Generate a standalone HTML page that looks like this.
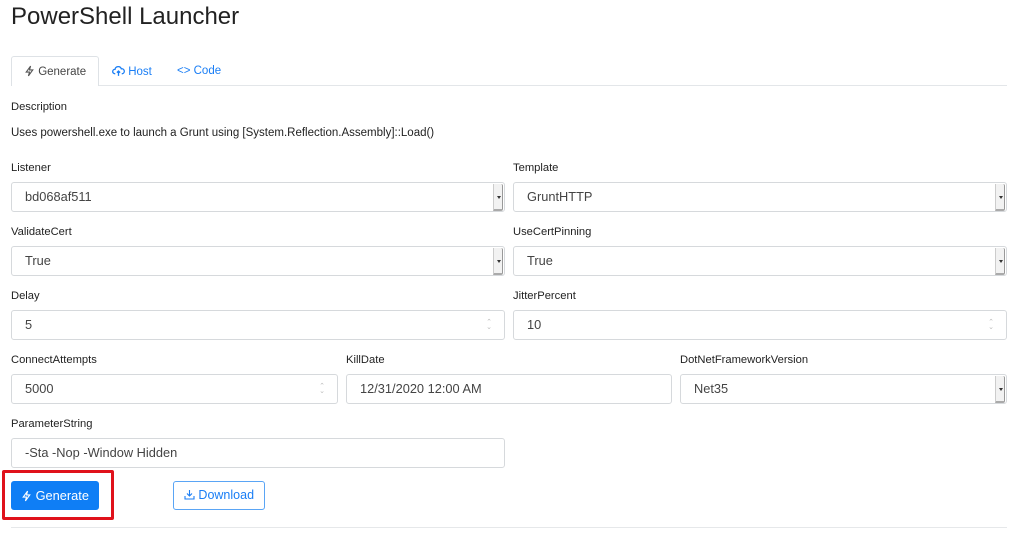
<!DOCTYPE html>
<html><head><meta charset="utf-8"><style>
*{box-sizing:border-box;margin:0;padding:0}
body{width:1024px;height:542px;background:#fff;font-family:"Liberation Sans",sans-serif;color:#212529;position:relative;overflow:hidden}
.a{position:absolute}
h1{position:absolute;left:11px;top:3px;font-size:24px;font-weight:400;color:#222}
.lbl{position:absolute;font-size:11.2px;color:#222}
.inp{position:absolute;height:30px;border:1px solid #d6d9dc;border-radius:3px;font-size:12.8px;color:#444;padding-left:13px;line-height:28px;background:#fff}
.sel .btn{position:absolute;right:1px;top:1px;width:10px;height:27px;border-left:1px solid #ccc;border-right:1px solid #999;border-bottom:2px solid #aaa;background:#f2f2f2;border-radius:0 2px 2px 0}
.sel .btn:after{content:"";position:absolute;left:3px;top:12px;border-left:2px solid transparent;border-right:2px solid transparent;border-top:3px solid #333}
.spin{position:absolute;right:12px;top:9px;font-size:7px;color:#bbb;line-height:5px}
</style></head><body>
<h1>PowerShell Launcher</h1>
<div class="a" style="left:11px;top:56px;width:88px;height:30px;border:1px solid #dee2e6;border-bottom:none;border-radius:3px 3px 0 0;background:#fff;z-index:2"></div>
<div class="a" style="left:11px;top:85px;width:996px;height:1px;background:#e3e6e9"></div>
<div class="a" style="left:24px;top:65px;font-size:11.5px;color:#444;z-index:3"><svg width="11" height="12" viewBox="0 0 10 11" style="vertical-align:-2px"><path d="M6 1L2 6.5H5L4 10L8 4.5H5Z" fill="none" stroke="#555" stroke-width="1"/></svg> Generate</div>
<div class="a" style="left:112px;top:65px;font-size:11.5px;color:#1a7ef5"><svg width="13" height="12" viewBox="0 0 12 11" style="vertical-align:-2px"><path d="M3 8H2.5A2 2 0 0 1 2.8 4 3 3 0 0 1 8.6 3.5 2.2 2.2 0 0 1 9.5 8H9M6 10V5.5M4.5 7L6 5.5 7.5 7" fill="none" stroke="#1a7ef5" stroke-width="1.2"/></svg> Host</div>
<div class="a" style="left:177px;top:65px;font-size:11.5px;color:#1a7ef5">&lt;&gt; Code</div>
<div class="lbl" style="left:11px;top:101px">Description</div>
<div class="lbl" style="left:11px;top:127px;font-size:11.5px">Uses powershell.exe to launch a Grunt using [System.Reflection.Assembly]::Load()</div>

<div class="lbl" style="left:11px;top:162px">Listener</div>
<div class="inp sel" style="left:11px;top:182px;width:494px">bd068af511<div class="btn"></div></div>
<div class="lbl" style="left:513px;top:162px">Template</div>
<div class="inp sel" style="left:513px;top:182px;width:494px">GruntHTTP<div class="btn"></div></div>

<div class="lbl" style="left:11px;top:226px">ValidateCert</div>
<div class="inp sel" style="left:11px;top:246px;width:494px">True<div class="btn"></div></div>
<div class="lbl" style="left:513px;top:226px">UseCertPinning</div>
<div class="inp sel" style="left:513px;top:246px;width:494px">True<div class="btn"></div></div>

<div class="lbl" style="left:11px;top:290px">Delay</div>
<div class="inp" style="left:11px;top:310px;width:494px">5<div class="spin">⌃<br>⌄</div></div>
<div class="lbl" style="left:513px;top:290px">JitterPercent</div>
<div class="inp" style="left:513px;top:310px;width:494px">10<div class="spin">⌃<br>⌄</div></div>

<div class="lbl" style="left:11px;top:354px">ConnectAttempts</div>
<div class="inp" style="left:11px;top:374px;width:327px">5000<div class="spin">⌃<br>⌄</div></div>
<div class="lbl" style="left:346px;top:354px">KillDate</div>
<div class="inp" style="left:346px;top:374px;width:326px">12/31/2020 12:00 AM</div>
<div class="lbl" style="left:680px;top:354px">DotNetFrameworkVersion</div>
<div class="inp sel" style="left:680px;top:374px;width:327px">Net35<div class="btn"></div></div>

<div class="lbl" style="left:11px;top:418px">ParameterString</div>
<div class="inp" style="left:11px;top:438px;width:494px">-Sta -Nop -Window Hidden</div>

<div class="a" style="left:2px;top:470px;width:112px;height:50px;border:3px solid #e0121b;border-radius:2px"></div>
<div class="a" style="left:11px;top:481px;width:88px;height:29px;background:#0f7ef5;border-radius:3px;color:#fff;font-size:12.8px;line-height:29px;text-align:center"><svg width="11" height="12" viewBox="0 0 10 11" style="vertical-align:-2px"><path d="M6 1L2 6.5H5L4 10L8 4.5H5Z" fill="none" stroke="#fff" stroke-width="1"/></svg> Generate</div>
<div class="a" style="left:173px;top:481px;width:92px;height:29px;border:1px solid #5aa5f5;border-radius:3px;color:#1a7ef5;font-size:12.5px;line-height:27px;text-align:center"><svg width="11" height="11" viewBox="0 0 11 11" style="vertical-align:-1px"><path d="M5.5 1V7M3 4.5L5.5 7 8 4.5M1 7V10H10V7" fill="none" stroke="#1a7ef5" stroke-width="1.1"/></svg> Download</div>
<div class="a" style="left:11px;top:527px;width:996px;height:1px;background:#e6e8ea"></div>
</body></html>
